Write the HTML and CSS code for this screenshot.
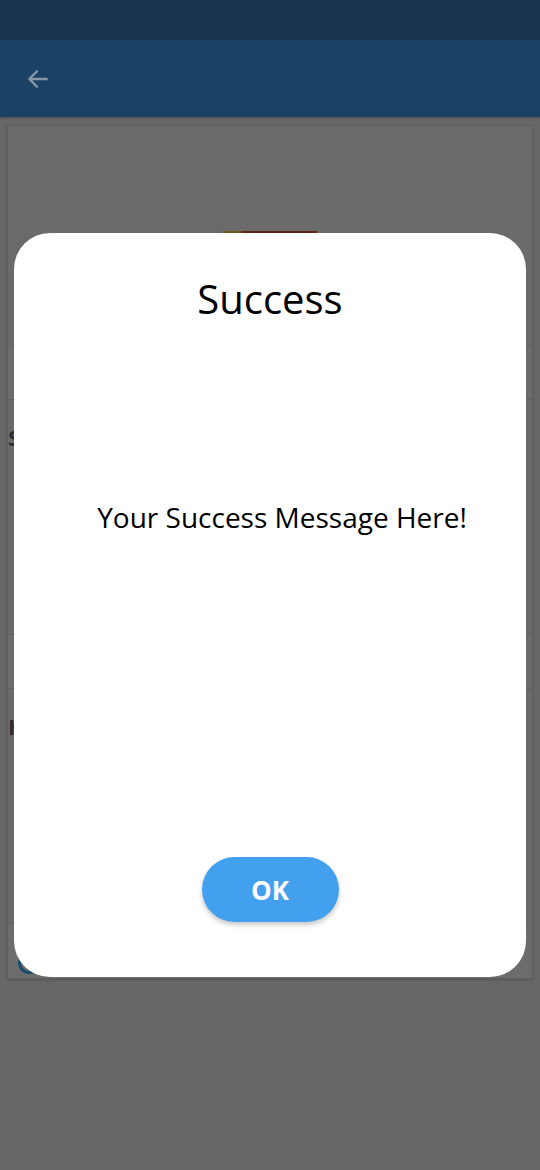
FILE: index.html
```html
<!DOCTYPE html>
<html lang="en">
<head>
<meta charset="utf-8">
<title>Success</title>
<link rel="stylesheet" href="styles.css">
</head>
<body>
<div class="screen">
  <div class="status-bar"></div>
  <header class="app-bar">
    <svg class="back" width="26" height="26" viewBox="0 0 24 24" aria-hidden="true">
      <path d="M20 12H4.5M11 5l-7 7 7 7" fill="none" stroke="#8797ab" stroke-width="2.2" stroke-linecap="round" stroke-linejoin="round"/>
    </svg>
  </header>
  <main class="content">
    <section class="card">
      <div class="card-image"><div class="flag"></div></div>
      <div class="strip"></div>
      <div class="section">
        <h2 class="section-title">S</h2>
      </div>
      <div class="strip"></div>
      <div class="section">
        <h2 class="section-title">H</h2>
      </div>
      <div class="strip last"><span class="dot"></span></div>
    </section>
  </main>
</div>

<div class="dialog" role="dialog" aria-labelledby="dlg-title">
  <h1 class="dialog-title" id="dlg-title">Success</h1>
  <p class="dialog-message">Your Success Message Here!</p>
  <button class="ok-btn" type="button">OK</button>
</div>
</body>
</html>
```

FILE: styles.css
```css
* { box-sizing: border-box; }
html, body { margin: 0; padding: 0; }
body {
  width: 540px;
  height: 1170px;
  overflow: hidden;
  background: #676767;
  font-family: "Open Sans", "Noto Sans", sans-serif;
}
.screen {
  display: flex;
  flex-direction: column;
  height: 1170px;
}
.status-bar {
  height: 40px;
  background: #1a3350;
}
.app-bar {
  height: 77px;
  background: #1b4264;
  display: flex;
  align-items: center;
  padding-left: 25px;
  box-shadow: 0 1px 2px rgba(0,0,0,0.25);
}
.back { display: block; }
.content {
  flex: 1;
  padding: 8px 7px 0 7px;
}
.card {
  height: 854px;
  background: #6a6a6a;
  border: 1px solid #5f5f5f;
  box-shadow: 0 1px 2px rgba(0,0,0,0.2);
  display: flex;
  flex-direction: column;
}
.card-image {
  height: 220px;
  display: flex;
  justify-content: center;
  align-items: flex-start;
}
.flag {
  width: 94px;
  height: 112px;
  margin-top: 105px;
  margin-left: 0;
  background: linear-gradient(90deg, #6b5a1a 0 18px, #5f2418 18px);
}
.strip {
  height: 55px;
  background: #6c6c6c;
  border-top: 1px solid #606060;
  border-bottom: 1px solid #606060;
}
.strip.last {
  margin-top: auto;
  border-bottom: none;
  position: relative;
}
.dot {
  position: absolute;
  left: 10px;
  top: 28px;
  width: 22px;
  height: 22px;
  border-radius: 50%;
  border: 3px solid #1a4a6e;
}
.section {
  height: 235px;
  padding: 22px 0 0 0;
}
.section-title {
  margin: 0;
  font-size: 22px;
  font-weight: 700;
  color: #2e2e2e;
  line-height: 30px;
}
.dialog {
  position: fixed;
  left: 14px;
  top: 233px;
  width: 512px;
  height: 744px;
  background: #ffffff;
  border-radius: 36px;
  display: flex;
  flex-direction: column;
  align-items: center;
}
.dialog-title {
  margin: 40px 0 0 0;
  font-size: 40px;
  font-weight: 400;
  line-height: 52px;
  color: #000;
}
.dialog-message {
  margin: 173px 0 0 0;
  padding-left: 24px;
  font-size: 28px;
  line-height: 38px;
  color: #000;
}
.ok-btn {
  margin-top: auto;
  margin-bottom: 55px;
  width: 137px;
  height: 65px;
  border: none;
  border-radius: 33px;
  background: #42a0ee;
  color: #fff;
  font-family: "Open Sans", "Noto Sans", sans-serif;
  font-size: 26px;
  font-weight: 700;
  padding-right: 6px;
  box-shadow: 0 3px 5px rgba(0,0,0,0.22);
}
```
